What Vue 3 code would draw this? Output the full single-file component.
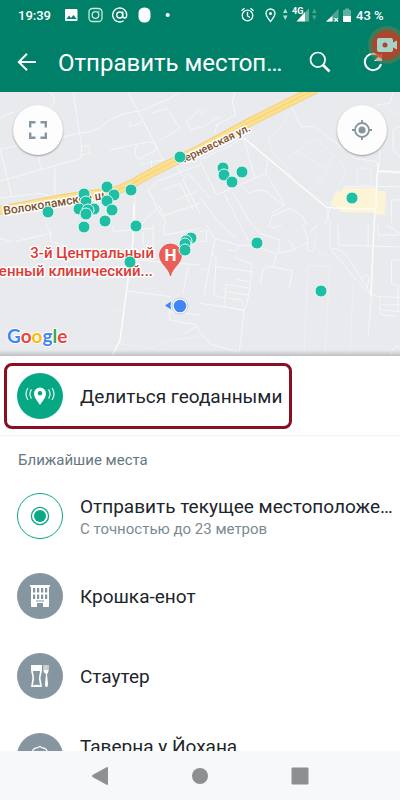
<script setup>
import { ref } from 'vue'

const mapPins = [
  [180, 157], [84, 194], [131, 190], [107, 187], [114, 195], [86, 202],
  [107, 201], [79, 209], [94, 209], [88, 210], [86, 214], [112, 210],
  [48, 212], [105, 221], [84, 227], [136, 226], [223, 168], [224, 175],
  [242, 172], [232, 182], [352, 198], [257, 243], [321, 291], [191, 238],
  [186, 241], [185, 244], [185, 250], [130, 262]
]

const places = ref([
  { id: 1, name: 'Крошка-енот', icon: 'building', hasAddress: false },
  { id: 2, name: 'Стаутер', icon: 'pub', hasAddress: false },
  { id: 3, name: 'Таверна у Йохана', icon: 'tavern', hasAddress: true }
])
</script>

<template>
  <div class="screen">
    <header class="header">
      <div class="status-bar">
        <span class="time">19:39</span>
        <svg class="status-left" viewBox="60 0 112 31" aria-hidden="true">
          <path fill="#fff" fill-rule="evenodd" d="M66 9h10.500q1 0 1 1v10q0 1-1 1H66q-1 0-1-1V10q0-1 1-1zM66.500 19h10l-3-4-2.500 3-2-2.500z" />
          <g fill="none" stroke="#c9ebe2" stroke-width="1.300">
            <rect x="89" y="8.500" width="13" height="13" rx="3.500" />
            <circle cx="95.500" cy="15" r="3.300" />
            <path d="M98.500 11.500h1" />
          </g>
          <g fill="none" stroke="#fff" stroke-width="1.400">
            <circle cx="119.700" cy="15" r="3" />
            <path d="M122.700 11.500v4.500q0 2 2 2q2 0 2-3a7 7 0 1 0-3 5.700" />
          </g>
          <rect x="138.500" y="7.500" width="12" height="15" rx="5.500" fill="#fff" />
          <circle cx="167.700" cy="15" r="2.100" fill="#fff" />
        </svg>
        <svg class="status-right" viewBox="240 0 112 31" aria-hidden="true">
          <g fill="none" stroke="#fff" stroke-width="1.300">
            <circle cx="247.500" cy="15.500" r="5.300" />
            <path d="M247.500 12v4l2.500 1.500M241.500 10.700l3-2.500M253.500 10.700l-3-2.500" />
            <path d="M270.500 21.500c-2.500-3-4.500-5.500-4.500-8a4.500 4.500 0 0 1 9 0c0 2.500-2 5-4.500 8z" />
          </g>
          <circle cx="270.500" cy="13.500" r="1.500" fill="#fff" />
          <path fill="#b5dcd3" d="M283 13h4.500l-2.200-4.500zM283 15.500h4.500l-2.200 4.500z" />
          <path fill="#63b0a0" d="M309 8.500v13h-5v-8z" />
          <path fill="#fff" d="M305 12v9.500h-8.500z" />
          <text class="net" x="292" y="14">4G</text>
          <path fill="#4da290" d="M312 13h4.500l-2.200-4.500zM312 15.500h4.500l-2.200 4.500z" />
          <path fill="#4da290" d="M338.500 8.500v9h-4v4h-8.500z" />
          <path fill="#fff" d="M326 21.500l6.500-5.500v5.500z" />
          <path stroke="#fff" stroke-width="1.200" d="M334.500 18l3.500 3.500M338 18l-3.500 3.500" />
          <path fill="#63b0a0" d="M345 8.500h4V10h2v6h-8v-6h2z" />
          <path fill="#fff" d="M343 16h8v6h-8z" />
        </svg>
        <span class="battery">43 %</span>
      </div>

      <div class="app-bar">
        <button class="icon-btn" aria-label="Назад">
          <svg width="20" height="20" viewBox="0 0 20 20" fill="none" stroke="#fff" stroke-width="2">
            <path d="M19 10H2.500M10 1.800L1.800 10l8.200 8.200" />
          </svg>
        </button>
        <h1 class="title">Отправить местоположение</h1>
        <button class="icon-btn" aria-label="Поиск">
          <svg width="22" height="22" viewBox="0 0 22 22" fill="none" stroke="#fff">
            <circle cx="8.800" cy="8.800" r="7.300" stroke-width="1.700" />
            <path d="M14 14l6.500 6.500" stroke-width="2.600" />
          </svg>
        </button>
        <button class="icon-btn" aria-label="Обновить">
          <svg width="20" height="20" viewBox="0 0 20 20">
            <path d="M16.800 5.200A8.200 8.200 0 1 0 18 12" fill="none" stroke="#fff" stroke-width="2" />
            <path d="M19 1v8h-8z" fill="#fff" />
          </svg>
        </button>
      </div>

      <div class="recorder">
        <svg width="20" height="14" viewBox="0 0 20 14">
          <path fill="#a9d3c9" fill-rule="evenodd" d="M2 0h12q2 0 2 2v2.500l4-2v9l-4-2V12q0 2-2 2H2q-2 0-2-2V2q0-2 2-2zM8 4.500a2.500 2.500 0 1 0 0 5a2.500 2.500 0 1 0 0-5z" />
        </svg>
      </div>
    </header>

    <section class="map">
      <svg class="map-canvas" viewBox="0 92 400 264" preserveAspectRatio="xMidYMid slice">
        <!-- yellow block -->
        <path fill="#fdf4d6" d="M343 188h33l1 3h9l-1 24-11-1v-1l-34-1v-4l-10-3 5-12 6-2z" />

        <!-- minor streets, drawn in four tiles -->
        <g class="streets">
          <g transform="translate(0 90) scale(0.333)">
            <path d="M0 85Q20 70 45 65M0 178L120 155L240 130Q290 125 310 105Q340 80 380 70L430 60L520 20L540 6" />
            <path d="M220 6L245 170L243 205L120 240L30 265L0 272M0 178L36 322M145 6Q180 20 150 60M120 200Q115 230 130 240M165 235V320M243 170L268 168L270 190L245 195" />
            <path d="M385 6L480 190L490 210L425 222M330 180L450 155L465 160L470 180L415 208Q400 195 410 165M390 95V110L425 98M455 70L500 55L540 115L475 155M600 60L560 95L575 120L600 112" />
            <path d="M0 325L120 310L170 325L210 350M600 225L470 275L445 300L485 380L600 340M490 300L540 280L580 360M530 330L590 305M405 310V405M455 210V230M525 220L550 260M600 290L565 250L550 270L600 370" />
            <path d="M425 405L455 370L480 350L500 405" />
          </g>
          <g transform="translate(200 90) scale(0.333)">
            <path d="M105 6L97 35L107 75L50 105L45 130M0 75L20 60M0 115L60 80M275 50L305 112L340 108L410 160L465 205L530 215L537 245M540 80V220M600 250L540 245M530 45L570 40L580 6M600 110L580 120V180L600 200" />
            <path d="M0 210L95 165L130 140L165 265L50 315L0 215M165 265L198 250L255 345L215 370M198 250L203 205M130 290L145 310L175 300L200 305L255 350M75 315L120 405M100 310L155 405M0 325L65 405M0 290L30 325M210 405L215 380L270 355L310 380L320 405" />
            <path class="faint" d="M275 55Q255 110 205 145L215 185L250 220L290 285L390 345L435 250L430 220L345 145L255 210M290 180L380 240L400 190M350 285L385 240" />
            <path class="faint" d="M475 235h40v50h-40q-10-25 0-50M550 45l50 30" />
            <path d="M380 355L390 400M375 405L390 355M430 290L600 290M600 330L575 330V400" />
          </g>
          <g transform="translate(0 225) scale(0.333)">
            <path d="M140 0L152 25L45 50M152 25V50L200 62M340 0V20L460 10M460 0V60M405 105L600 120M470 100L430 90M565 125L550 205M380 198L510 215M510 230L508 285L590 300L600 320M510 260L600 270M555 325L590 305M0 40L35 50M490 0L495 30L600 10M430 20V60" />
            <path class="faint" d="M330 255L365 258M355 355L450 370L520 345L600 335M290 165L370 155" />
          </g>
          <g transform="translate(200 225) scale(0.333)">
            <path d="M0 20L20 15V50L0 48M20 0L45 45L35 90Q50 90 48 115L42 210L75 220L78 178L150 190M45 40L120 62L155 60L230 85L220 125M35 90L12 210M0 132L20 133M80 75L110 78L120 60M48 125L165 142M105 95Q110 105 155 115L150 190L140 240L130 258L75 245V220M75 200L145 210M85 220L125 225L130 245M105 162L145 170" />
            <path d="M0 235L133 255L118 382L30 358L0 322M182 175Q185 125 205 124L278 137L267 193M120 0L145 45M160 0L180 25L240 45L235 85Q280 80 325 50L310 0M265 45L285 70M325 50L320 75L340 80M325 25L355 0M65 0L105 35M200 0L225 10L245 0" />
            <path d="M390 0V70L500 200L535 215L600 218M395 70Q430 70 450 105L515 210L505 335M415 0V60L600 66M505 0V62M535 0V30H600M540 215V255L600 260M545 240H600M540 260L545 270L590 275M600 105H575V175L595 185V260M485 160Q500 140 508 160L500 190M575 390Q575 365 600 362M560 0L600 25" />
            <path class="faint" d="M325 120L312 390M390 125L375 390M460 180L450 390M325 120L390 125M340 80L350 20M340 50L360 90L380 85" />
          </g>
        </g>
        <g class="streets wide">
          <path d="M244 138L326 207L334 208L376 209M376 207L377 176L379 163M375 209L373 247L371 296M378 171L400 172M134 204L133 240L127 288L120 340L112 356" />
        </g>

        <!-- main road -->
        <path class="road-edge" d="M-4 211L66 198L110 192Q125 189 142 178Q160 168 200 149L250 122L316 89" />
        <path class="road" d="M-4 211L66 198L110 192Q125 189 142 178Q160 168 200 149L250 122L316 89" />
        <path class="road-line" d="M110 192Q125 189 142 178Q160 168 200 149L250 122L316 89" />

        <text class="street-name large" transform="translate(4 215) rotate(-9)">Волоколамское ш.</text>
        <text class="street-name" transform="translate(180 165) rotate(-26)">Черневская ул.</text>

        <text class="poi-name" x="154" y="258">3-й Центральный</text>
        <text class="poi-name" x="153" y="276">енный клинический...</text>

        <path fill="#ec5f56" stroke="#d9453d" stroke-width="0.600" d="M170.500 276c-2-9-11-12-11-21a11 11 0 0 1 22 0c0 9-9 12-11 21z" />
        <text class="poi-letter" x="170.500" y="261">H</text>

        <circle v-for="(pin, i) in mapPins" :key="i" class="pin" :cx="pin[0]" :cy="pin[1]" r="6" />

        <circle cx="180" cy="306" r="8" fill="#fff" stroke="#aebfdd" stroke-width="0.700" />
        <circle cx="180" cy="306" r="6.300" fill="#4285f4" />
        <path fill="#4285f4" d="M165 305.500l6-4q-1 4 0 8z" />

        <text class="google" x="7" y="343"><tspan fill="#4285f4">G</tspan><tspan fill="#ea4335">o</tspan><tspan fill="#fbbc05">o</tspan><tspan fill="#4285f4">g</tspan><tspan fill="#34a853">l</tspan><tspan fill="#ea4335">e</tspan></text>
      </svg>

      <button class="map-btn left" aria-label="На весь экран">
        <svg width="18" height="18" viewBox="0 0 18 18" fill="none" stroke="#8696a0" stroke-width="2.400">
          <path d="M1.200 6.500V1.200h5.300M11.500 1.200h5.300v5.300M16.800 11.500v5.300h-5.300M6.500 16.800H1.200v-5.300" />
        </svg>
      </button>
      <button class="map-btn right" aria-label="Моё местоположение">
        <svg width="20" height="20" viewBox="0 0 20 20" fill="none" stroke="#8696a0" stroke-width="1.800">
          <circle cx="10" cy="10" r="7" />
          <circle cx="10" cy="10" r="3.600" fill="#8696a0" stroke="none" />
          <path d="M10 0v3M10 17v3M0 10h3M17 10h3" />
        </svg>
      </button>
    </section>

    <main class="sheet">
      <div class="share">
        <button class="share-btn">
          <span class="avatar green">
            <svg width="30" height="20" viewBox="0 0 30 20">
              <path fill="#fff" fill-rule="evenodd" d="M15 19c-2.500-4-6-7.500-6-11.500a6 6 0 0 1 12 0c0 4-3.500 7.500-6 11.500zM15 5a2.300 2.300 0 1 0 0 4.600a2.300 2.300 0 1 0 0-4.600z" />
              <g fill="none" stroke="#d5f1e9" stroke-width="1.300">
                <path d="M6.500 3.500q-3.200 4.500 0 9M3 2q-4 6 0 12M23.500 3.500q3.200 4.500 0 9M27 2q4 6 0 12" />
              </g>
            </svg>
          </span>
          <span class="name">Делиться геоданными</span>
        </button>
      </div>

      <h2 class="section-title">Ближайшие места</h2>

      <button class="row">
        <span class="avatar outline">
          <svg width="20" height="20" viewBox="0 0 20 20">
            <circle cx="10" cy="10" r="8.600" fill="none" stroke="#0aa885" stroke-width="1.300" />
            <circle cx="10" cy="10" r="6" fill="#0aa885" />
          </svg>
        </span>
        <span class="text">
          <span class="name">Отправить текущее местоположение</span>
          <span class="sub">С точностью до 23 метров</span>
        </span>
      </button>

      <button v-for="place in places" :key="place.id" class="row">
        <span class="avatar gray">
          <svg v-if="place.icon === 'building'" width="20" height="22" viewBox="0 0 20 22">
            <path fill="#fff" d="M0 0h20v2h-1v20h-6v-4H7v4H1V2H0z" />
            <path fill="#8696a0" d="M3 3h2.200v4.500H3zM7 3h2.200v4.500H7zM11 3h2.200v4.500H11zM15 3h2.200v4.500H15zM3 9.500h2.200V14H3zM7 9.500h2.200V14H7zM11 9.500h2.200V14H11zM15 9.500h2.200V14H15zM6 15.500h8v1H6z" />
          </svg>
          <svg v-else-if="place.icon === 'pub'" width="20" height="24" viewBox="0 0 20 24">
            <path fill="#fff" fill-rule="evenodd" d="M1 1h11v4q0 3-1 6t0 6l1 6H1l1-6q1-3 0-6T1 5zM3 7q0 2 .8 5t-.3 6l-.5 3.500q3.500-1.500 7 0L9.500 18q-1-3-.3-6T10 7z" />
            <path fill="#fff" d="M13.500 1h1v5h.9V1h1.200v5h.9V1h1v6q0 2-1.500 3l1 10q.2 3-1.500 3t-1.500-3l1-10q-2.500-1-2.500-3z" />
          </svg>
          <svg v-else width="22" height="22" viewBox="0 0 22 22" fill="none" stroke="#fff" stroke-width="1.300">
            <path d="M4 8q-1-3 1.500-4.500Q8 3 11 1.500Q13 3 16 3.500Q18.500 5 18 8v12H4z" />
          </svg>
        </span>
        <span class="text">
          <span class="name">{{ place.name }}</span>
          <span v-if="place.hasAddress" class="sub"></span>
        </span>
      </button>
    </main>

    <nav class="nav-bar">
      <button class="nav-btn" aria-label="Назад">
        <svg width="18" height="20" viewBox="0 0 18 20"><path fill="#8e8f91" d="M16 1q1 0 1 1v16q0 1-1 1L1.500 11q-1-1 0-2z" /></svg>
      </button>
      <button class="nav-btn" aria-label="Домой">
        <svg width="18" height="18" viewBox="0 0 18 18"><circle cx="9" cy="9" r="8" fill="#8e8f91" /></svg>
      </button>
      <button class="nav-btn" aria-label="Недавние">
        <svg width="18" height="18" viewBox="0 0 18 18"><rect x="0.500" y="0.500" width="17" height="17" rx="1" fill="#8e8f91" /></svg>
      </button>
    </nav>
  </div>
</template>

<style>
body {
  margin: 0;
}
</style>

<style scoped>
.screen {
  display: flex;
  flex-direction: column;
  height: 100vh;
  overflow: hidden;
  background: #fff;
  font-family: Roboto, "Noto Sans", sans-serif;
  color: #1c252b;
}

button {
  padding: 0;
  border: none;
  background: none;
  font: inherit;
  color: inherit;
  text-align: left;
}

svg {
  display: block;
  flex-shrink: 0;
}

/* --- HEADER --- */
.header {
  position: relative;
  flex-shrink: 0;
  background: #008069;
  color: #fff;
}

.status-bar {
  display: flex;
  align-items: center;
  height: 31px;
  padding: 0 18px;
  font-size: 13px;
  font-weight: 500;
}

.time {
  width: 42px;
}

.status-left,
.status-right {
  width: 112px;
  height: 31px;
}

.status-right {
  margin-left: auto;
}

.battery {
  width: 26px;
  margin-left: 4px;
  white-space: nowrap;
}

.net {
  font-size: 9px;
  font-weight: 700;
  fill: #fff;
}

.app-bar {
  display: flex;
  align-items: center;
  height: 61px;
  padding: 0 17px;
}

.title {
  flex: 1;
  min-width: 0;
  margin: 0 20px 0 21px;
  padding-top: 2px;
  font-size: 24px;
  font-weight: 400;
  line-height: 32px;
  white-space: nowrap;
  overflow: hidden;
  text-overflow: ellipsis;
}

.icon-btn + .icon-btn {
  margin-left: 32px;
}

.recorder {
  position: absolute;
  right: -6px;
  top: 26px;
  display: flex;
  align-items: center;
  justify-content: center;
  width: 30px;
  height: 30px;
  border: 4px solid rgba(120, 120, 70, 0.5);
  border-radius: 50%;
  background: rgba(200, 62, 38, 0.85);
  background-clip: padding-box;
}

/* --- MAP --- */
.map {
  position: relative;
  flex: 0 0 33vh;
  overflow: hidden;
  background: #e8eaed;
}

.map::after {
  content: "";
  position: absolute;
  left: 0;
  right: 0;
  bottom: 0;
  height: 6px;
  background: linear-gradient(rgba(0, 0, 0, 0), rgba(0, 0, 0, 0.18));
}

.map-canvas {
  width: 100%;
  height: 100%;
}

.streets {
  fill: none;
  stroke: #f5f6f8;
  stroke-width: 3;
  stroke-linejoin: round;
}

.streets .faint {
  stroke: #eef0f2;
}

.streets.wide {
  stroke: #fcfcfd;
  stroke-width: 1.5;
}

.road-edge,
.road,
.road-line {
  fill: none;
  stroke: #f3cf78;
  stroke-width: 9;
}

.road {
  stroke: #fde08d;
  stroke-width: 7;
}

.road-line {
  stroke-width: 1;
}

.street-name {
  font-size: 11px;
  font-weight: 500;
  fill: #7d4f2a;
  stroke: #fff;
  stroke-width: 3;
  stroke-linejoin: round;
  paint-order: stroke;
}

.street-name.large {
  font-size: 12px;
}

.poi-name {
  font-size: 15px;
  font-weight: 500;
  fill: #dc3b35;
  stroke: #fff;
  stroke-width: 3;
  stroke-linejoin: round;
  paint-order: stroke;
  text-anchor: end;
}

.poi-letter {
  font-size: 17px;
  font-weight: 700;
  fill: #fff;
  text-anchor: middle;
}

.pin {
  fill: #1fbfa5;
  stroke: #e9f7f4;
  stroke-width: 1;
}

.google {
  font-family: Lato, sans-serif;
  font-size: 19px;
  font-weight: 700;
  stroke: #fff;
  stroke-width: 2;
  paint-order: stroke;
}

.map-btn {
  position: absolute;
  top: 13px;
  display: flex;
  align-items: center;
  justify-content: center;
  width: 50px;
  height: 50px;
  border-radius: 50%;
  background: #fdfdfd;
  box-shadow: 0 1px 2px rgba(0, 0, 0, 0.35);
}

.map-btn.left {
  left: 13px;
}

.map-btn.right {
  right: 13px;
}

/* --- LIST --- */
.sheet {
  flex: 1;
  min-height: 0;
  overflow-y: auto;
  scrollbar-width: none;
}

.share {
  padding: 7px 4px 6px;
  border-bottom: 1px solid #eff0f1;
}

.share-btn {
  display: flex;
  align-items: center;
  gap: 17px;
  height: 66px;
  padding: 0 7px 0 10px;
  border: 3px solid #8a0f24;
  border-radius: 8px;
}

.avatar {
  display: flex;
  align-items: center;
  justify-content: center;
  flex-shrink: 0;
  box-sizing: border-box;
  width: 46px;
  height: 46px;
  border-radius: 50%;
}

.avatar.green {
  background: #06a884;
}

.avatar.outline {
  border: 1px solid #0aa885;
}

.avatar.gray {
  background: #8696a0;
}

.section-title {
  margin: 0;
  padding: 14px 18px 6px;
  font-size: 15px;
  font-weight: 400;
  line-height: 20px;
  color: #667781;
}

.row {
  display: flex;
  align-items: center;
  gap: 17px;
  width: 100%;
  height: 80px;
  padding: 0 4px 0 17px;
}

.text {
  display: flex;
  flex-direction: column;
  min-width: 0;
}

.name {
  padding-top: 2px;
  font-size: 19px;
  line-height: 24px;
  white-space: nowrap;
  overflow: hidden;
  text-overflow: ellipsis;
}

.sub {
  min-height: 20px;
  font-size: 15px;
  line-height: 20px;
  color: #7b8a93;
}

/* --- SYSTEM NAVIGATION --- */
.nav-bar {
  display: grid;
  grid-template-columns: repeat(3, 1fr);
  flex-shrink: 0;
  height: 49px;
  padding: 0 12.5%;
  background: #f7f8fa;
}

.nav-btn {
  display: flex;
  align-items: center;
  justify-content: center;
}
</style>
